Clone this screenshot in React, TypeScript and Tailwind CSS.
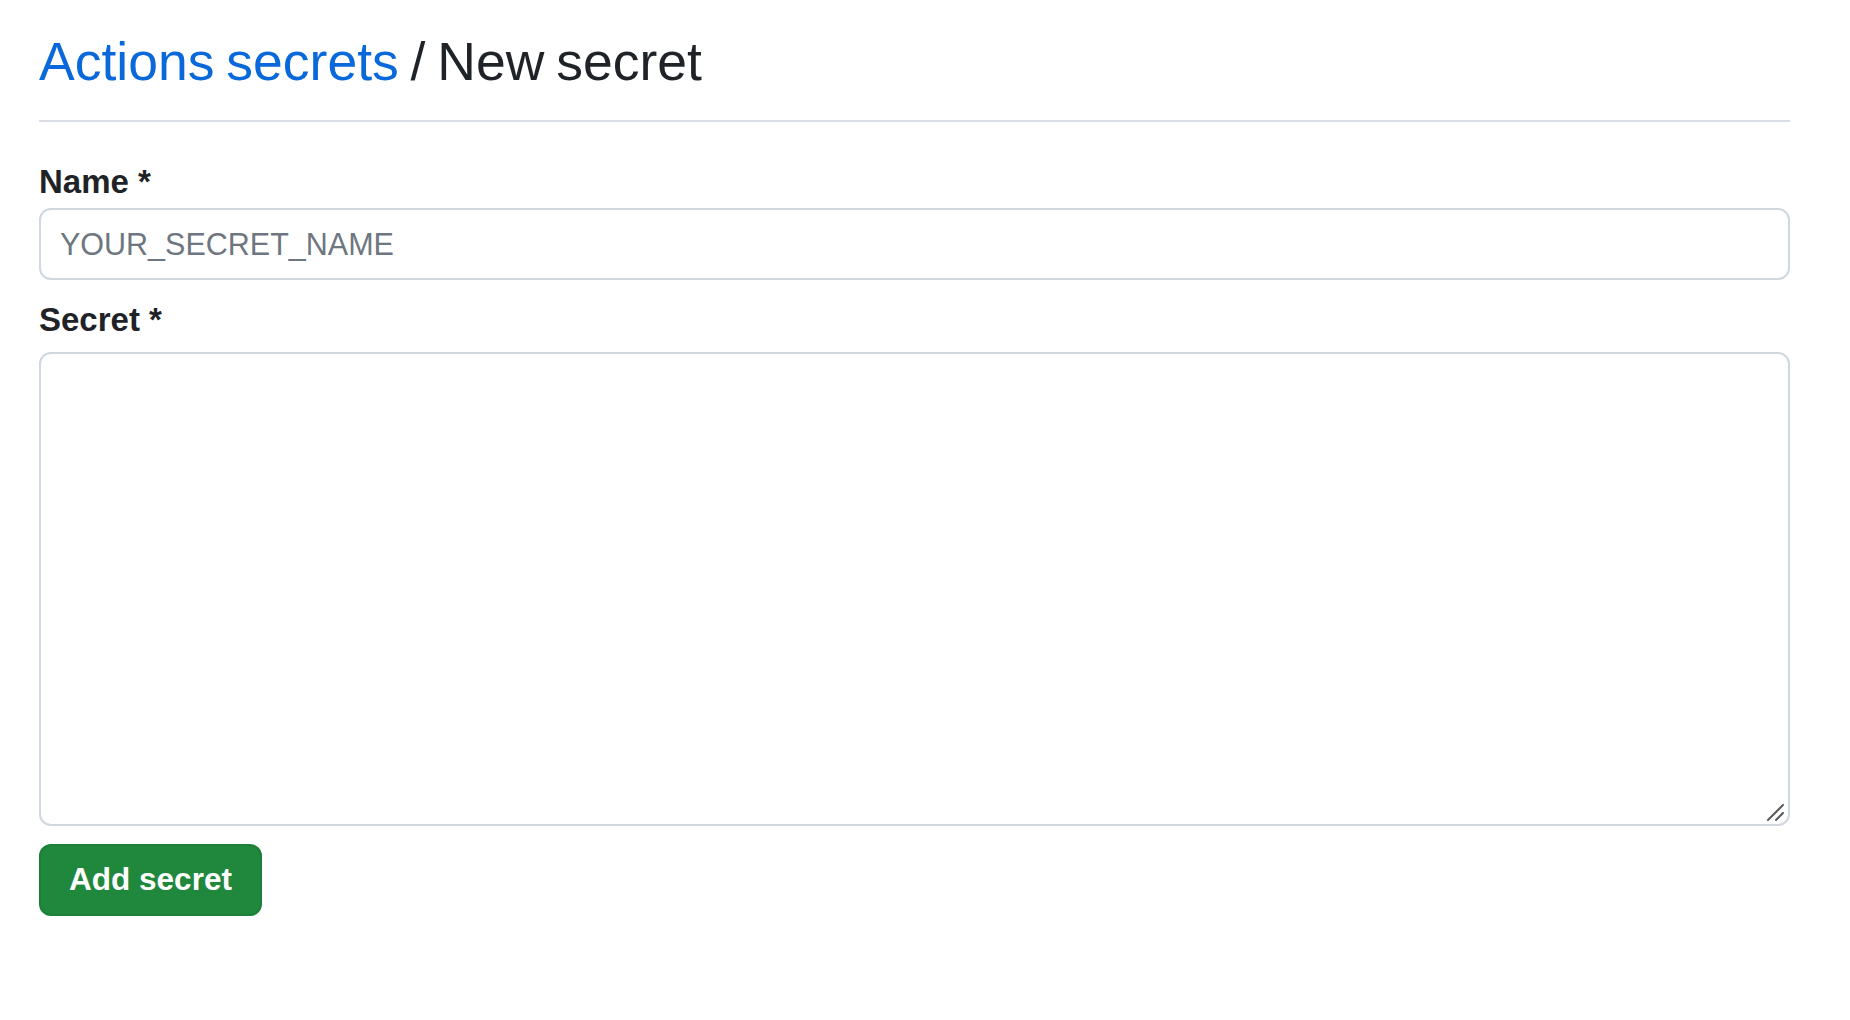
import React from 'react';

export default function App() {
  return (
    <div className="min-h-screen w-full bg-white font-['Liberation_Sans',Arial,sans-serif] text-[#1f2328]">
      <div className="pl-[39px] pr-[60px] pt-[29px]">
        {/* Heading */}
        <div className="border-b-2 border-[#d8dee4] pb-[25px]">
          <h1 className="text-[53.5px] leading-[66px] font-normal [word-spacing:-3px]">
            <a href="#" className="text-[#0969da]">Actions secrets</a>
            <span> / New secret</span>
          </h1>
        </div>

        <form className="flex flex-col" onSubmit={(e) => e.preventDefault()}>
          {/* Name */}
          <label htmlFor="secret_name" className="mt-[40px] text-[33px] leading-[40px] font-bold">
            Name *
          </label>
          <input
            id="secret_name"
            type="text"
            placeholder="YOUR_SECRET_NAME"
            className="mt-[6px] h-[72px] w-full rounded-[12px] border-2 border-[#d0d7de] bg-white px-[19px] text-[30.5px] text-[#1f2328] outline-none placeholder:text-[#6e7781]"
          />

          {/* Secret */}
          <label htmlFor="secret_value" className="mt-[20px] text-[33px] leading-[40px] font-bold">
            Secret *
          </label>
          <div className="relative mt-[12px]">
            <textarea
              id="secret_value"
              className="block h-[474px] w-full resize-none rounded-[12px] border-2 border-[#d0d7de] bg-white px-[19px] py-[12px] text-[30px] outline-none"
            />
            <svg
              className="pointer-events-none absolute bottom-[4px] right-[4px]"
              width="20"
              height="20"
              viewBox="0 0 20 20"
              fill="none"
              stroke="#5a5a5a"
              strokeWidth="2"
              strokeLinecap="round"
            >
              <line x1="2" y1="18" x2="17" y2="3" />
              <line x1="10" y1="18" x2="17" y2="11" />
            </svg>
          </div>

          <div className="mt-[18px]">
            <button
              type="submit"
              className="h-[72px] w-[223px] rounded-[12px] border-2 border-[#1a7f37] bg-[#1f883d] text-[31.5px] font-bold text-white"
            >
              Add secret
            </button>
          </div>
        </form>
      </div>
    </div>
  );
}
